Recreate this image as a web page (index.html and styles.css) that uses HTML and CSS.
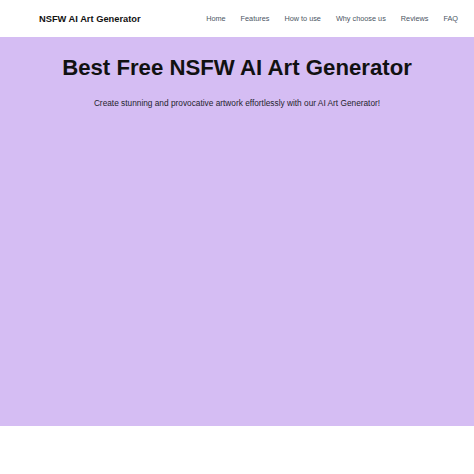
FILE: index.html
```html
<!DOCTYPE html>
<html>
<head>
<meta charset="utf-8">
<link rel="stylesheet" href="styles.css">
</head>
<body>
<header class="site-header">
  <div class="logo">NSFW AI Art Generator</div>
  <nav class="nav">
    <a href="#">Home</a>
    <a href="#">Features</a>
    <a href="#">How to use</a>
    <a href="#">Why choose us</a>
    <a href="#">Reviews</a>
    <a href="#">FAQ</a>
  </nav>
</header>
<section class="hero">
  <h1 class="hero-title">Best Free NSFW AI Art Generator</h1>
  <p class="hero-sub">Create stunning and provocative artwork effortlessly with our AI Art Generator!</p>
</section>
</body>
</html>
```
FILE: styles.css
```css
* { box-sizing: border-box; }
body {
  margin: 0;
  font-family: "Liberation Sans", Arial, sans-serif;
  background: #ffffff;
  color: #111;
}
.site-header {
  height: 37px;
  display: flex;
  align-items: center;
  justify-content: space-between;
  padding: 0 16px 0 39px;
  background: #fff;
}
.logo {
  font-weight: bold;
  font-size: 9.3px;
  color: #111;
}
.nav {
  display: flex;
  gap: 15px;
}
.nav a {
  font-size: 7.3px;
  color: #4b5563;
  text-decoration: none;
}
.hero {
  height: 389px;
  background: #d5bdf3;
  display: flex;
  flex-direction: column;
  align-items: center;
  padding-top: 18px;
}
.hero-title {
  margin: 0;
  font-size: 22.2px;
  font-weight: bold;
  color: #111;
}
.hero-sub {
  margin: 16.5px 0 0;
  font-size: 8.3px;
  color: #1f1f2e;
}
```
